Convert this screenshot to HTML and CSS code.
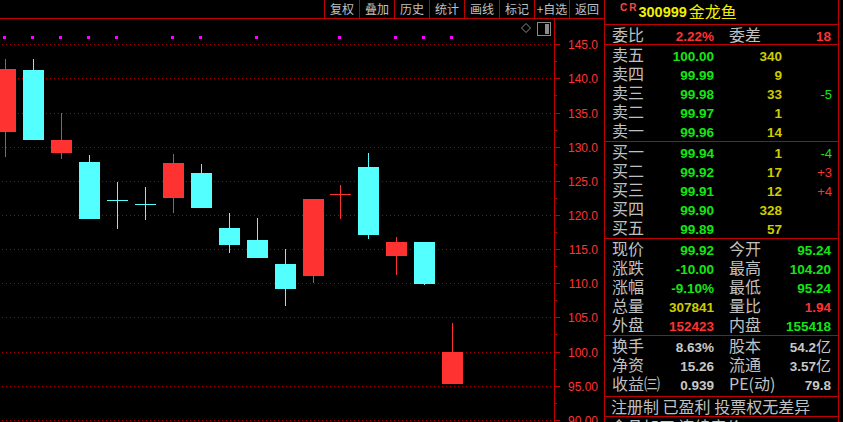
FILE: index.html
```html
<!DOCTYPE html>
<html>
<head>
    <meta charset="utf-8"/>
    <title>金龙鱼 300999</title>
    <link rel="stylesheet" href="styles.css">
</head>

<body>
<div class="screen">
    <div class="left">
        <div class="toolbar">
            <span class="tb">复权</span>
            <span class="tb">叠加</span>
            <span class="tb">历史</span>
            <span class="tb">统计</span>
            <span class="tb">画线</span>
            <span class="tb">标记</span>
            <span class="tb">+自选</span>
            <span class="tb">返回</span>
        </div>
        <div class="chart">
            <svg width="604" height="403" viewBox="0 19 604 403">
                <!-- 网格虚线 -->
                <g class="grid">
                    <line x1="2" x2="551" y1="44.5" y2="44.5"/>
                    <line x1="2" x2="551" y1="78.5" y2="78.5"/>
                    <line x1="2" x2="551" y1="113.5" y2="113.5"/>
                    <line x1="2" x2="551" y1="147.5" y2="147.5"/>
                    <line x1="2" x2="551" y1="181.5" y2="181.5"/>
                    <line x1="2" x2="551" y1="215.5" y2="215.5"/>
                    <line x1="2" x2="551" y1="249.5" y2="249.5"/>
                    <line x1="2" x2="551" y1="283.5" y2="283.5"/>
                    <line x1="2" x2="551" y1="317.5" y2="317.5"/>
                    <line x1="2" x2="551" y1="352.5" y2="352.5"/>
                    <line x1="2" x2="551" y1="386.5" y2="386.5"/>
                    <line x1="2" x2="551" y1="420.5" y2="420.5"/>
                </g>
                <!-- 标记点 -->
                <g class="mark">
                    <rect x="3" y="36" width="3" height="3"/>
                    <rect x="31" y="36" width="3" height="3"/>
                    <rect x="59" y="36" width="3" height="3"/>
                    <rect x="87" y="36" width="3" height="3"/>
                    <rect x="115" y="36" width="3" height="3"/>
                    <rect x="171" y="36" width="3" height="3"/>
                    <rect x="199" y="36" width="3" height="3"/>
                    <rect x="255" y="36" width="3" height="3"/>
                    <rect x="338" y="36" width="3" height="3"/>
                    <rect x="394" y="36" width="3" height="3"/>
                    <rect x="422" y="36" width="3" height="3"/>
                    <rect x="450" y="36" width="3" height="3"/>
                </g>
                <!-- 阳线 -->
                <g class="up">
                    <rect x="5" y="59" width="1" height="98"/>
                    <rect x="-5" y="69" width="21" height="63"/>
                    <rect x="61" y="113" width="1" height="46"/>
                    <rect x="51" y="140" width="21" height="13"/>
                    <rect x="173" y="154" width="1" height="59"/>
                    <rect x="163" y="163" width="21" height="35"/>
                    <rect x="313" y="199" width="1" height="84"/>
                    <rect x="303" y="199" width="21" height="77"/>
                    <rect x="340" y="185" width="1" height="34"/>
                    <rect x="330" y="194" width="21" height="1"/>
                    <rect x="396" y="237" width="1" height="38"/>
                    <rect x="386" y="242" width="21" height="14"/>
                    <rect x="452" y="323" width="1" height="29"/>
                    <rect x="442" y="352" width="21" height="32"/>
                </g>
                <!-- 阴线 -->
                <g class="down">
                    <rect x="33" y="59" width="1" height="11"/>
                    <rect x="23" y="70" width="21" height="70"/>
                    <rect x="89" y="155" width="1" height="7"/>
                    <rect x="79" y="162" width="21" height="57"/>
                    <rect x="117" y="182" width="1" height="47"/>
                    <rect x="107" y="200" width="21" height="1"/>
                    <rect x="145" y="187" width="1" height="33"/>
                    <rect x="135" y="204" width="21" height="1"/>
                    <rect x="201" y="164" width="1" height="9"/>
                    <rect x="191" y="173" width="21" height="35"/>
                    <rect x="229" y="213" width="1" height="40"/>
                    <rect x="219" y="228" width="21" height="17"/>
                    <rect x="257" y="218" width="1" height="22"/>
                    <rect x="247" y="240" width="21" height="18"/>
                    <rect x="285" y="249" width="1" height="57"/>
                    <rect x="275" y="264" width="21" height="25"/>
                    <rect x="368" y="153" width="1" height="86"/>
                    <rect x="358" y="167" width="21" height="68"/>
                    <rect x="424" y="242" width="1" height="43"/>
                    <rect x="414" y="242" width="21" height="42"/>
                </g>
                <!-- 右上角小图标 -->
                <polygon class="ico" points="526,23.5 530.5,28 526,32.5 521.5,28"/>
                <rect class="ico" x="537.5" y="22.5" width="13" height="13"/>
                <rect class="ico-fill" x="545" y="24" width="4" height="10"/>
                <!-- 坐标轴 -->
                <g class="axis">
                    <line x1="554.5" x2="554.5" y1="19" y2="422"/>
                    <line x1="554" x2="560" y1="44.5" y2="44.5"/>
                    <line x1="554" x2="560" y1="78.5" y2="78.5"/>
                    <line x1="554" x2="560" y1="113.5" y2="113.5"/>
                    <line x1="554" x2="560" y1="147.5" y2="147.5"/>
                    <line x1="554" x2="560" y1="181.5" y2="181.5"/>
                    <line x1="554" x2="560" y1="215.5" y2="215.5"/>
                    <line x1="554" x2="560" y1="249.5" y2="249.5"/>
                    <line x1="554" x2="560" y1="283.5" y2="283.5"/>
                    <line x1="554" x2="560" y1="317.5" y2="317.5"/>
                    <line x1="554" x2="560" y1="352.5" y2="352.5"/>
                    <line x1="554" x2="560" y1="386.5" y2="386.5"/>
                    <line x1="554" x2="560" y1="420.5" y2="420.5"/>
                    <line x1="554" x2="557" y1="61.5" y2="61.5"/>
                    <line x1="554" x2="557" y1="95.5" y2="95.5"/>
                    <line x1="554" x2="557" y1="130.5" y2="130.5"/>
                    <line x1="554" x2="557" y1="164.5" y2="164.5"/>
                    <line x1="554" x2="557" y1="198.5" y2="198.5"/>
                    <line x1="554" x2="557" y1="232.5" y2="232.5"/>
                    <line x1="554" x2="557" y1="266.5" y2="266.5"/>
                    <line x1="554" x2="557" y1="300.5" y2="300.5"/>
                    <line x1="554" x2="557" y1="334.5" y2="334.5"/>
                    <line x1="554" x2="557" y1="369.5" y2="369.5"/>
                    <line x1="554" x2="557" y1="403.5" y2="403.5"/>
                </g>
                <g class="price">
                    <text x="598" y="49">145.0</text>
                    <text x="598" y="83">140.0</text>
                    <text x="598" y="118">135.0</text>
                    <text x="598" y="152">130.0</text>
                    <text x="598" y="186">125.0</text>
                    <text x="598" y="220">120.0</text>
                    <text x="598" y="254">115.0</text>
                    <text x="598" y="288">110.0</text>
                    <text x="598" y="322">105.0</text>
                    <text x="598" y="357">100.0</text>
                    <text x="598" y="391">95.00</text>
                    <text x="598" y="425">90.00</text>
                </g>
            </svg>
        </div>
    </div>

    <div class="panel">
        <div class="head">
            <span class="cr">CR</span>
            <span class="code">300999</span>
            <span class="name">金龙鱼</span>
        </div>

        <div class="sec">
            <div class="row s"><span class="lb">委比</span><span class="num r">2.22%</span><span></span><span class="lb">委差</span><span class="num r">18</span></div>
        </div>

        <div class="sec five">
            <div class="row q"><span class="lb">卖五</span><span class="num g">100.00</span><span class="num y">340</span><span class="chg"></span></div>
            <div class="row q"><span class="lb">卖四</span><span class="num g">99.99</span><span class="num y">9</span><span class="chg"></span></div>
            <div class="row q"><span class="lb">卖三</span><span class="num g">99.98</span><span class="num y">33</span><span class="chg g">-5</span></div>
            <div class="row q"><span class="lb">卖二</span><span class="num g">99.97</span><span class="num y">1</span><span class="chg"></span></div>
            <div class="row q"><span class="lb">卖一</span><span class="num g">99.96</span><span class="num y">14</span><span class="chg"></span></div>
        </div>

        <div class="sec five">
            <div class="row q"><span class="lb">买一</span><span class="num g">99.94</span><span class="num y">1</span><span class="chg g">-4</span></div>
            <div class="row q"><span class="lb">买二</span><span class="num g">99.92</span><span class="num y">17</span><span class="chg r">+3</span></div>
            <div class="row q"><span class="lb">买三</span><span class="num g">99.91</span><span class="num y">12</span><span class="chg r">+4</span></div>
            <div class="row q"><span class="lb">买四</span><span class="num g">99.90</span><span class="num y">328</span><span class="chg"></span></div>
            <div class="row q"><span class="lb">买五</span><span class="num g">99.89</span><span class="num y">57</span><span class="chg"></span></div>
        </div>

        <div class="sec five">
            <div class="row s"><span class="lb">现价</span><span class="num g">99.92</span><span></span><span class="lb">今开</span><span class="num g">95.24</span></div>
            <div class="row s"><span class="lb">涨跌</span><span class="num g">-10.00</span><span></span><span class="lb">最高</span><span class="num g">104.20</span></div>
            <div class="row s"><span class="lb">涨幅</span><span class="num g">-9.10%</span><span></span><span class="lb">最低</span><span class="num g">95.24</span></div>
            <div class="row s"><span class="lb">总量</span><span class="num y">307841</span><span></span><span class="lb">量比</span><span class="num r">1.94</span></div>
            <div class="row s"><span class="lb">外盘</span><span class="num r">152423</span><span></span><span class="lb">内盘</span><span class="num g">155418</span></div>
        </div>

        <div class="sec fin">
            <div class="row s"><span class="lb">换手</span><span class="num w">8.63%</span><span></span><span class="lb">股本</span><span class="num w">54.2<i>亿</i></span></div>
            <div class="row s"><span class="lb">净资</span><span class="num w">15.26</span><span></span><span class="lb">流通</span><span class="num w">3.57<i>亿</i></span></div>
            <div class="row s"><span class="lb">收益㈢</span><span class="num w">0.939</span><span></span><span class="lb">PE(动)</span><span class="num w">79.8</span></div>
        </div>

        <div class="sec tag">注册制 已盈利 投票权无差异</div>
        <div class="tag">食品加工 连续竞价</div>
    </div>
    <div class="edge"></div>
</div>
</body>
</html>
```

FILE: styles.css
```css
* {
    margin: 0;
    padding: 0;
    box-sizing: border-box;
}

body {
    background: #000;
    width: 843px;
    height: 422px;
    overflow: hidden;
    font-family: "Noto Sans CJK SC", sans-serif;
    color: #c0c0c0;
}

.screen {
    display: flex;
    height: 422px;
}

.left {
    width: 604px;
    display: flex;
    flex-direction: column;
}

.toolbar {
    height: 19px;
    border-bottom: 1px solid #c00000;
    display: flex;
    justify-content: flex-end;
}

.tb {
    width: 35px;
    border-left: 1px solid #c00000;
    font-size: 12px;
    line-height: 18px;
    text-align: center;
    color: #c0c0c0;
}

.chart svg {
    display: block;
}

.grid line {
    stroke: #b00000;
    stroke-width: 1;
    stroke-dasharray: 1 3;
}

.mark rect {
    fill: #ff00ff;
}

.up rect {
    fill: #ff3232;
}

.down rect {
    fill: #54ffff;
}

.ico {
    fill: none;
    stroke: #8c8c8c;
    stroke-width: 1;
}

.ico-fill {
    fill: #8c8c8c;
}

.axis line {
    stroke: #c00000;
    stroke-width: 1;
}

.price text {
    fill: #ff3232;
    font-family: "Liberation Sans", sans-serif;
    font-size: 12px;
    text-anchor: end;
}

/* 右侧盘口 */
.panel {
    width: 235px;
    border-left: 1px solid #c00000;
    border-right: 1px solid #c00000;
}

.head {
    height: 25px;
    border-bottom: 1px solid #c00000;
    display: flex;
    align-items: flex-start;
    padding-left: 15px;
}

.cr {
    font: bold 10px "Liberation Sans", sans-serif;
    color: #ff4646;
    letter-spacing: 2px;
    line-height: 9px;
    margin-top: 3px;
}

.code {
    font: bold 14.5px "Liberation Sans", sans-serif;
    color: #f0f000;
    line-height: 14px;
    margin-top: 5px;
}

.name {
    font-size: 16px;
    line-height: 22px;
    color: #f0f000;
    margin-left: 2px;
}

.sec {
    border-bottom: 1px solid #c00000;
}

.five {
    padding-bottom: 1px;
}

.fin {
    padding-bottom: 3px;
}

.row {
    display: grid;
    align-items: baseline;
    height: 19px;
    line-height: 19px;
    padding-left: 7px;
    white-space: nowrap;
}

.row.q {
    grid-template-columns: 40px 62px 68px 50px;
}

.row.s {
    grid-template-columns: 40px 62px 15px 40px 62px;
}

.lb {
    font-size: 16px;
    color: #c0c0c0;
}

.num {
    font: bold 13.5px "Liberation Sans", sans-serif;
    line-height: 19px;
    text-align: right;
}

.num i {
    font-style: normal;
    font-weight: normal;
    font-size: 15px;
    line-height: 1;
    font-family: "Noto Sans CJK SC", sans-serif;
}

.chg {
    font: 13px "Liberation Sans", sans-serif;
    line-height: 19px;
    text-align: right;
}

.g {
    color: #14e614;
}

.y {
    color: #cccc00;
}

.r {
    color: #ff3232;
}

.w {
    color: #c8c8c8;
}

.tag {
    height: 20px;
    line-height: 19px;
    font-size: 16px;
    padding-left: 6px;
    white-space: nowrap;
    color: #c0c0c0;
}

.edge {
    width: 4px;
}
```
